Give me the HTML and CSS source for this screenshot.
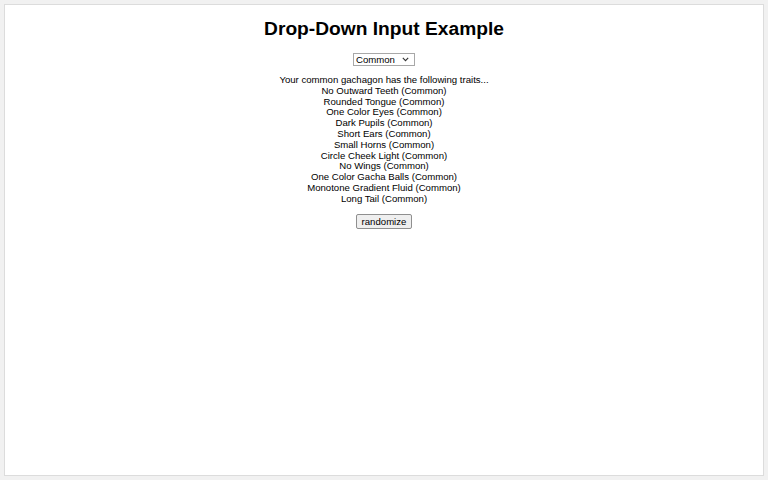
FILE: index.html
```html
<!DOCTYPE html>
<html>
<head>
<meta charset="utf-8">
<link rel="stylesheet" href="styles.css">
</head>
<body>
<div class="panel">
  <h1 class="title">Drop-Down Input Example</h1>
  <span class="select-wrap">
    <select class="rarity">
      <option>Common</option>
      <option>Rare</option>
      <option>Legendary</option>
    </select>
    <svg class="chev" width="7" height="5" viewBox="0 0 7 5"><path d="M0.8 0.8 L3.5 3.6 L6.2 0.8" fill="none" stroke="#333" stroke-width="1.1"/></svg>
  </span>
  <div class="traits">
    <div>Your common gachagon has the following traits...</div>
    <div>No Outward Teeth (Common)</div>
    <div>Rounded Tongue (Common)</div>
    <div>One Color Eyes (Common)</div>
    <div>Dark Pupils (Common)</div>
    <div>Short Ears (Common)</div>
    <div>Small Horns (Common)</div>
    <div>Circle Cheek Light (Common)</div>
    <div>No Wings (Common)</div>
    <div>One Color Gacha Balls (Common)</div>
    <div>Monotone Gradient Fluid (Common)</div>
    <div>Long Tail (Common)</div>
  </div>
  <button class="rand">randomize</button>
</div>
</body>
</html>
```
FILE: styles.css
```css
html, body {
  margin: 0;
  padding: 0;
}
body {
  background: #f1f1f1;
  padding: 4px;
  height: 480px;
  box-sizing: border-box;
  font-family: "Liberation Sans", Arial, sans-serif;
  color: #000;
}
.panel {
  background: #fff;
  border: 1px solid #dcdcdc;
  height: 472px;
  box-sizing: border-box;
  display: flex;
  flex-direction: column;
  align-items: center;
}
.title {
  font-size: 19.2px;
  font-weight: bold;
  margin: 12px 0 0 0;
  line-height: 23px;
}
.select-wrap {
  position: relative;
  display: inline-flex;
  margin-top: 13px;
}
.rarity {
  appearance: none;
  -webkit-appearance: none;
  font-family: "Liberation Sans", Arial, sans-serif;
  font-size: 9.6px;
  width: 62px;
  height: 13px;
  padding: 0 0 0 2px;
  line-height: 11px;
  border: 1px solid #a8a8a8;
  border-radius: 0;
  background: #fff;
  color: #000;
  box-sizing: border-box;
}
.chev {
  position: absolute;
  right: 6px;
  top: 4px;
  pointer-events: none;
}
.traits {
  margin-top: 9px;
  font-size: 9.6px;
  line-height: 10.8px;
  text-align: center;
}
.rand {
  margin-top: 9px;
  font-family: "Liberation Sans", Arial, sans-serif;
  font-size: 9.6px;
  padding: 0 5px;
  height: 15px;
  line-height: 13px;
  border: 1px solid #8f8f8f;
  border-radius: 2px;
  background: #efefef;
  color: #000;
}
```
